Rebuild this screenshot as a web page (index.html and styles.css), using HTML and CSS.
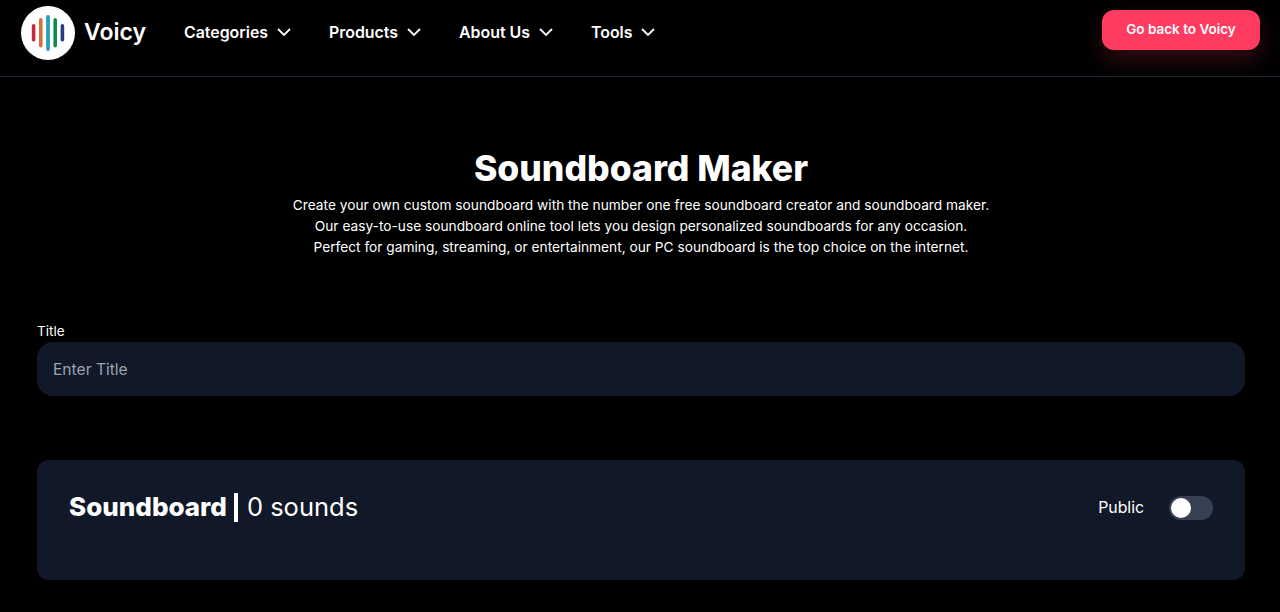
FILE: index.html
```html
<!DOCTYPE html>
<html lang="en">
<head>
    <meta charset="UTF-8">
    <title>Soundboard Maker</title>
    <link rel="stylesheet" href="styles.css">
</head>
<body>
<header class="topbar">
    <a class="brand" href="#">
        <span class="brand-logo">
            <svg width="54" height="54" viewBox="0 0 54 54">
                <circle cx="27" cy="27" r="27" fill="#fff"/>
                <rect x="10.8" y="18" width="3.6" height="17.5" rx="1.8" fill="#c8283e"/>
                <rect x="18" y="12" width="3.6" height="29.5" rx="1.8" fill="#d8703c"/>
                <rect x="25.1" y="9" width="3.8" height="36" rx="1.9" fill="#2a9cc8"/>
                <rect x="32.4" y="12" width="3.6" height="29.5" rx="1.8" fill="#0f8a52"/>
                <rect x="39.6" y="18" width="3.6" height="17.5" rx="1.8" fill="#2c3a80"/>
            </svg>
        </span>
        <span class="brand-name">Voicy</span>
    </a>
    <nav class="nav">
        <a class="nav-item" href="#">Categories <svg class="chev" width="16" height="10" viewBox="0 0 16 10"><path d="M2 2l6 6 6-6"/></svg></a>
        <a class="nav-item" href="#">Products <svg class="chev" width="16" height="10" viewBox="0 0 16 10"><path d="M2 2l6 6 6-6"/></svg></a>
        <a class="nav-item" href="#">About Us <svg class="chev" width="16" height="10" viewBox="0 0 16 10"><path d="M2 2l6 6 6-6"/></svg></a>
        <a class="nav-item" href="#">Tools <svg class="chev" width="16" height="10" viewBox="0 0 16 10"><path d="M2 2l6 6 6-6"/></svg></a>
    </nav>
    <a class="back-btn" href="#">Go back to Voicy</a>
</header>

<main class="main">
    <section class="intro">
        <h1>Soundboard Maker</h1>
        <p>Create your own custom soundboard with the number one free soundboard creator and soundboard maker.</p>
        <p>Our easy-to-use soundboard online tool lets you design personalized soundboards for any occasion.</p>
        <p>Perfect for gaming, streaming, or entertainment, our PC soundboard is the top choice on the internet.</p>
    </section>

    <div class="field">
        <label for="title">Title</label>
        <input type="text" id="title" placeholder="Enter Title">
    </div>

    <section class="card">
        <div class="card-title"><b>Soundboard</b><span class="sep"></span><span class="count">0 sounds</span></div>
        <div class="public">
            <span class="public-label">Public</span>
            <span class="toggle"><span class="knob"></span></span>
        </div>
    </section>
</main>
</body>
</html>
```

FILE: styles.css
```css
* {
    box-sizing: border-box;
}
body {
    margin: 0;
    background: #000;
    color: #fff;
    font-family: Inter, "Noto Sans", sans-serif;
    height: 612px;
    overflow: hidden;
}
a {
    color: #fff;
    text-decoration: none;
}
.topbar {
    display: flex;
    align-items: flex-start;
    height: 77px;
    border-bottom: 1px solid #1f2937;
    padding: 6px 20px 0 21px;
}
.brand {
    display: flex;
    align-items: center;
    gap: 9px;
    width: 163px;
}
.brand-logo {
    display: block;
    height: 54px;
}
.brand-name {
    font-size: 23px;
    font-weight: 600;
    margin-bottom: 2px;
}
.nav {
    display: flex;
    gap: 37px;
    height: 52px;
    align-items: center;
}
.nav-item {
    display: flex;
    align-items: center;
    gap: 8px;
    font-size: 15.9px;
    font-weight: 600;
}
.chev {
    fill: none;
    stroke: #fff;
    stroke-width: 1.8;
}
.back-btn {
    margin: 4px 0 0 auto;
    width: 158px;
    height: 40px;
    line-height: 39px;
    text-align: center;
    background: #ff3b61;
    border-radius: 12px;
    font-size: 13.5px;
    font-weight: 600;
    box-shadow: 0 10px 25px rgba(255, 59, 97, 0.2);
}
.main {
    padding: 0 35px 0 37px;
}
.intro {
    text-align: center;
    padding-top: 70px;
}
.intro h1 {
    margin: 0 0 4px;
    font-size: 35.5px;
    line-height: 44px;
    font-weight: 800;
}
.intro p {
    margin: 0;
    font-size: 13.72px;
    line-height: 21px;
}
.field {
    margin-top: 63px;
}
.field label {
    display: block;
    font-size: 13.5px;
    line-height: 20px;
    margin-bottom: 1px;
}
.field input {
    display: block;
    width: 100%;
    height: 54px;
    background: #111827;
    border: 0;
    border-radius: 16px;
    padding: 0 16px;
    color: #fff;
    font-family: inherit;
    font-size: 15.6px;
}
.field input::placeholder {
    color: #9ca3af;
    opacity: 1;
}
.card {
    display: flex;
    justify-content: space-between;
    align-items: flex-start;
    margin-top: 64px;
    height: 120px;
    background: #111827;
    border-radius: 12px;
    padding: 30px 32px;
}
.card-title {
    display: flex;
    align-items: center;
    font-size: 26px;
    line-height: 36px;
    margin-top: -1px;
}
.card-title b {
    font-weight: 800;
}
.count {
    font-size: 25.5px;
}
.sep {
    width: 4px;
    height: 29px;
    background: #fff;
    margin: 0 9px 0 7px;
}
.public {
    display: flex;
    align-items: center;
    gap: 25px;
    font-size: 15.8px;
    height: 36px;
}
.public-label {
    margin-bottom: 2px;
}
.toggle {
    display: block;
    width: 44px;
    height: 24px;
    border-radius: 12px;
    background: #374151;
    padding: 2px;
}
.knob {
    display: block;
    width: 20px;
    height: 20px;
    border-radius: 50%;
    background: #fff;
}
```
